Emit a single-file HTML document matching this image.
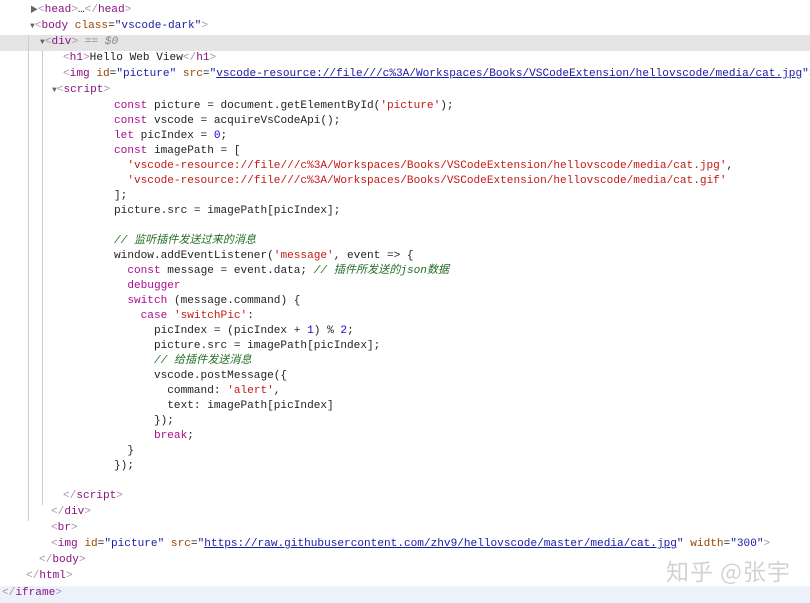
<!DOCTYPE html>
<html><head><meta charset="utf-8"><style>
body{margin:0;width:810px;height:603px;background:#fff;overflow:hidden;position:relative;font-family:"Liberation Mono","Noto Sans CJK SC",monospace;font-size:11.1px;color:#222}
.l{position:absolute;left:0;height:15px;line-height:15px;white-space:pre}
.t{color:#881280}.b{color:#a894a6}.a{color:#994500}.v{color:#1a1aa6}.u{color:#1a1aa6;text-decoration:underline}
.k{color:#aa0d91}.s{color:#c41a16}.n{color:#1c00cf}.c{color:#236e25;font-style:italic}
.tri{color:#666;font-size:8px}
</style></head><body>
<div style="position:absolute;left:0;top:35px;width:810px;height:16px;background:#e4e4e4"></div>
<div style="position:absolute;left:0;top:586px;width:810px;height:17px;background:#edf2fa"></div>
<div style="position:absolute;left:28px;top:35px;width:1px;height:486px;background:#ccc"></div>
<div style="position:absolute;left:42px;top:51px;width:1px;height:454px;background:#ccc"></div>
<div class="l" style="top:3px;left:30px"><span class="tri">▶</span><span class="b">&lt;</span><span class="t">head</span><span class="b">&gt;</span>…<span class="b">&lt;/</span><span class="t">head</span><span class="b">&gt;</span></div>
<div class="l" style="top:19px;left:30px"><span class="tri">▼</span><span class="b">&lt;</span><span class="t">body</span> <span class="a">class</span>=<span class="v">"vscode-dark"</span><span class="b">&gt;</span></div>
<div class="l" style="top:35px;left:40px"><span class="tri">▼</span><span class="b">&lt;</span><span class="t">div</span><span class="b">&gt;</span> <span style="color:#888">== <i>$0</i></span></div>
<div class="l" style="top:51px;left:63px"><span class="b">&lt;</span><span class="t">h1</span><span class="b">&gt;</span>Hello Web View<span class="b">&lt;/</span><span class="t">h1</span><span class="b">&gt;</span></div>
<div class="l" style="top:67px;left:63px"><span class="b">&lt;</span><span class="t">img</span> <span class="a">id</span>=<span class="v">"picture"</span> <span class="a">src</span>=<span class="v">"</span><span class="u">vscode-resource://file///c%3A/Workspaces/Books/VSCodeExtension/hellovscode/media/cat.jpg</span><span class="v">"</span><span class="b">&gt;</span></div>
<div class="l" style="top:83px;left:52px"><span class="tri">▼</span><span class="b">&lt;</span><span class="t">script</span><span class="b">&gt;</span></div>
<div class="l" style="top:99px;left:114px"><span class="k">const</span> picture = document.getElementById(<span class="s">'picture'</span>);</div>
<div class="l" style="top:114px;left:114px"><span class="k">const</span> vscode = acquireVsCodeApi();</div>
<div class="l" style="top:129px;left:114px"><span class="k">let</span> picIndex = <span class="n">0</span>;</div>
<div class="l" style="top:144px;left:114px"><span class="k">const</span> imagePath = [</div>
<div class="l" style="top:159px;left:114px">  <span class="s">'vscode-resource://file///c%3A/Workspaces/Books/VSCodeExtension/hellovscode/media/cat.jpg'</span>,</div>
<div class="l" style="top:174px;left:114px">  <span class="s">'vscode-resource://file///c%3A/Workspaces/Books/VSCodeExtension/hellovscode/media/cat.gif'</span></div>
<div class="l" style="top:189px;left:114px">];</div>
<div class="l" style="top:204px;left:114px">picture.src = imagePath[picIndex];</div>
<div class="l" style="top:234px;left:114px"><span class="c">// 监听插件发送过来的消息</span></div>
<div class="l" style="top:249px;left:114px">window.addEventListener(<span class="s">'message'</span>, event =&gt; {</div>
<div class="l" style="top:264px;left:114px">  <span class="k">const</span> message = event.data; <span class="c">// 插件所发送的json数据</span></div>
<div class="l" style="top:279px;left:114px">  <span class="k">debugger</span></div>
<div class="l" style="top:294px;left:114px">  <span class="k">switch</span> (message.command) {</div>
<div class="l" style="top:309px;left:114px">    <span class="k">case</span> <span class="s">'switchPic'</span>:</div>
<div class="l" style="top:324px;left:114px">      picIndex = (picIndex + <span class="n">1</span>) % <span class="n">2</span>;</div>
<div class="l" style="top:339px;left:114px">      picture.src = imagePath[picIndex];</div>
<div class="l" style="top:354px;left:114px">      <span class="c">// 给插件发送消息</span></div>
<div class="l" style="top:369px;left:114px">      vscode.postMessage({</div>
<div class="l" style="top:384px;left:114px">        command: <span class="s">'alert'</span>,</div>
<div class="l" style="top:399px;left:114px">        text: imagePath[picIndex]</div>
<div class="l" style="top:414px;left:114px">      });</div>
<div class="l" style="top:429px;left:114px">      <span class="k">break</span>;</div>
<div class="l" style="top:444px;left:114px">  }</div>
<div class="l" style="top:459px;left:114px">});</div>
<div class="l" style="top:489px;left:63px"><span class="b">&lt;/</span><span class="t">script</span><span class="b">&gt;</span></div>
<div class="l" style="top:505px;left:51px"><span class="b">&lt;/</span><span class="t">div</span><span class="b">&gt;</span></div>
<div class="l" style="top:521px;left:51px"><span class="b">&lt;</span><span class="t">br</span><span class="b">&gt;</span></div>
<div class="l" style="top:537px;left:51px"><span class="b">&lt;</span><span class="t">img</span> <span class="a">id</span>=<span class="v">"picture"</span> <span class="a">src</span>=<span class="v">"</span><span class="u">https://raw.githubusercontent.com/zhv9/hellovscode/master/media/cat.jpg</span><span class="v">"</span> <span class="a">width</span>=<span class="v">"300"</span><span class="b">&gt;</span></div>
<div class="l" style="top:553px;left:39px"><span class="b">&lt;/</span><span class="t">body</span><span class="b">&gt;</span></div>
<div class="l" style="top:569px;left:26px"><span class="b">&lt;/</span><span class="t">html</span><span class="b">&gt;</span></div>
<div class="l" style="top:586px;left:2px"><span class="b">&lt;/</span><span class="t">iframe</span><span class="b">&gt;</span></div>
<div style="position:absolute;left:666px;top:555px;font-family:'Noto Sans CJK SC',sans-serif;font-size:23px;color:#d2d2d2;line-height:30px;letter-spacing:1px">知乎 @张宇</div>
</body></html>
